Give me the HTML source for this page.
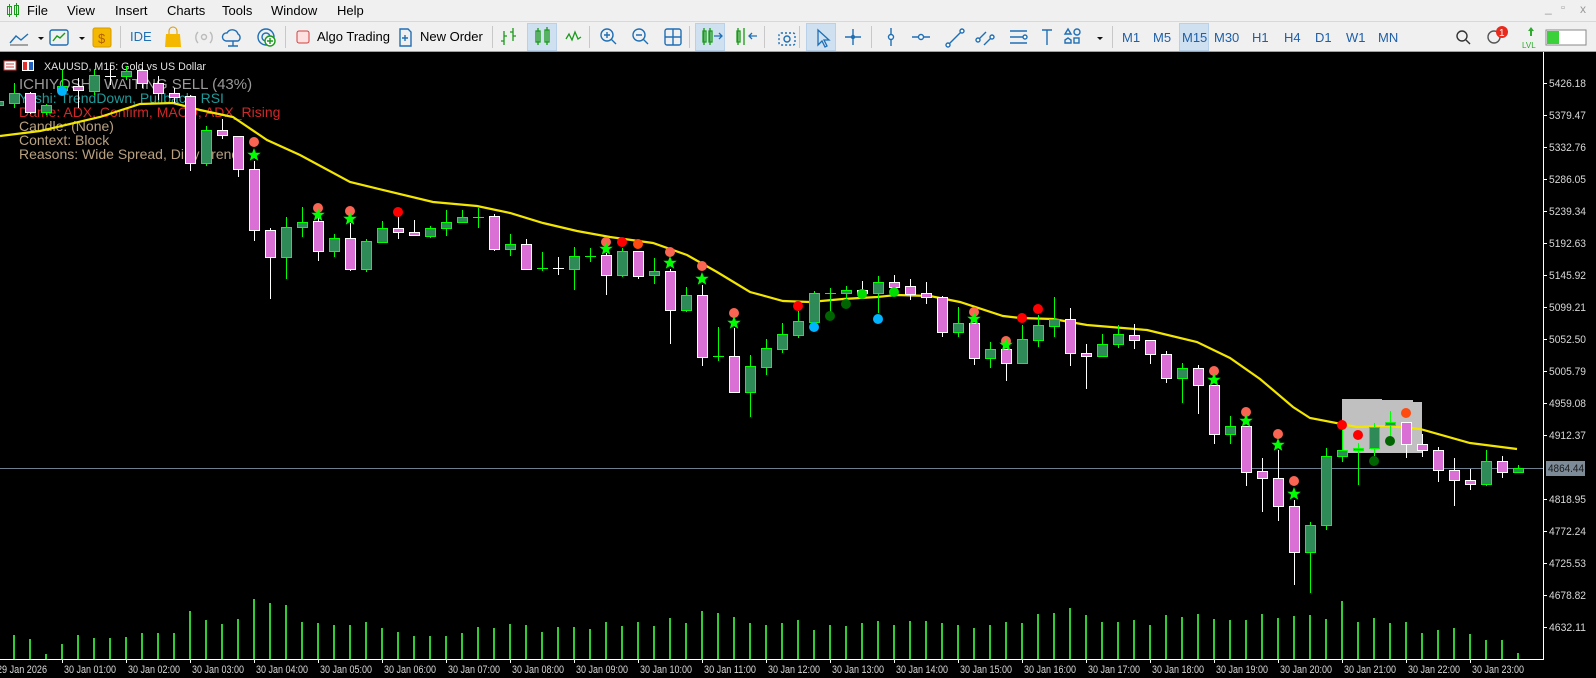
<!DOCTYPE html>
<html><head><meta charset="utf-8"><style>
*{margin:0;padding:0;box-sizing:border-box}
body{width:1596px;height:678px;overflow:hidden;background:#000;font-family:"Liberation Sans",sans-serif;position:relative}
#menu{position:absolute;left:0;top:0;width:1596px;height:21px;background:#f0f0f0;font-size:13px;color:#000}
#menu span{position:absolute;top:3px}
#tb{position:absolute;left:0;top:21px;width:1596px;height:31px;background:#f0f0f0;border-top:1px solid #d8d8d8;border-bottom:1px solid #a0a0a0}
#tb .t{position:absolute;top:7px;font-size:13px;color:#000}
#tb .tf{position:absolute;top:8px;font-size:13px;color:#1e5fa8}
#tb .sep{position:absolute;top:4px;width:1px;height:22px;background:#c8c8c8}
#tb .sel{position:absolute;top:1px;height:28px;background:#cfe0f0;border:1px solid #b8d0e8}
#tb svg{position:absolute;top:0}
#chart{position:absolute;left:0;top:52px}
</style></head><body>
<div id="menu">
<svg style="position:absolute;left:6px;top:3px" width="14" height="15"><rect x="1.5" y="3.5" width="4" height="8" fill="none" stroke="#1a9a1a"/><rect x="8.5" y="2.5" width="4" height="9" fill="none" stroke="#1a9a1a"/><path d="M3.5 1V14M10.5 0V14" stroke="#1a9a1a"/></svg>
<span style="left:27px">File</span><span style="left:67px">View</span><span style="left:115px">Insert</span><span style="left:167px">Charts</span><span style="left:222px">Tools</span><span style="left:271px">Window</span><span style="left:337px">Help</span>
<span style="left:1545px;top:1px;color:#999;font-size:12px">_</span><span style="left:1561px;top:2px;color:#999;font-size:11px">▫</span><span style="left:1580px;top:2px;color:#999;font-size:12px">x</span>
</div>
<div id="tb">
<svg width="1596" height="31" style="left:0">
<g fill="none" stroke="#1f6fb5" stroke-width="1.4">
<path d="M10 21 L16 14 L21 18 L28 12" /><path d="M10 23H28" stroke="#888"/>
<rect x="50" y="8" width="18" height="15" rx="2"/><path d="M53 19 L57 14 L60 16 L65 11" stroke="#1a9a1a"/>
<circle cx="204" cy="15" r="2.5" stroke="#bbb"/><path d="M198 10a8 8 0 0 0 0 11M210 10a8 8 0 0 1 0 11" stroke="#bbb"/>
<path d="M226 19a4 4 0 0 1 1-8a6 6 0 0 1 11 1a4 4 0 0 1 0 7z M233 19V24M228 24H238"/>
<circle cx="266" cy="15" r="8"/><circle cx="266" cy="15" r="4"/><circle cx="270" cy="19" r="5" fill="#fff" stroke="#1a9a1a"/><path d="M270 16V22M267 19H273" stroke="#1a9a1a"/>
<path d="M400 7h8l3 3v14h-11z"/><path d="M405 13v6M402 16h6"/>
<circle cx="607" cy="13" r="6"/><path d="M611 17l5 5M604 13h6M607 10v6"/>
<circle cx="639" cy="13" r="6"/><path d="M643 17l5 5M636 13h6"/>
<rect x="665" y="7" width="16" height="16" rx="2"/><path d="M673 7v16M665 15h16"/>
<rect x="779" y="11" width="16" height="12" rx="2" stroke-dasharray="2 2"/><circle cx="787" cy="17" r="3"/>
<path d="M853 7v16M845 15h16"/><circle cx="853" cy="15" r="1.5" fill="#1f6fb5"/>
<path d="M891 6v18"/><circle cx="891" cy="15" r="2.5" fill="#fff"/>
<path d="M912 15h18"/><circle cx="921" cy="15" r="2.5" fill="#fff"/>
<path d="M948 23l14-14"/><circle cx="948" cy="23" r="2" fill="#fff"/><circle cx="962" cy="9" r="2" fill="#fff"/>
<path d="M978 18l8-8M984 23l8-8"/><circle cx="978" cy="18" r="2" fill="#fff"/><circle cx="992" cy="15" r="2" fill="#fff"/>
<path d="M1010 9h17M1010 15h17M1010 21h17"/><circle cx="1025" cy="15" r="2" fill="#fff"/>
<path d="M1042 8h10M1047 8v15"/>
<path d="M1068 7l3 5h-6z"/><circle cx="1077" cy="10" r="3"/><path d="M1068 16l3 2v3h-6v-3z"/><rect x="1074" y="16" width="5" height="5"/>
<circle cx="1462" cy="14" r="5" stroke="#333"/><path d="M1466 18l4 4" stroke="#333"/>
<circle cx="1494" cy="15" r="6" stroke="#555"/>
</g>
<path d="M38 15h6l-3 3z M79 15h6l-3 3z M1097 15h6l-3 3z" fill="#111"/>
<rect x="93" y="6" width="18" height="19" rx="2" fill="#f5b800" stroke="#d89a00"/><text x="98" y="21" font-size="13" fill="#b06000" font-family="Liberation Sans">$</text>
<path d="M166 12h14l1 13h-16z" fill="#f5b800"/><path d="M169 12v-3a4 4 0 0 1 8 0v3" fill="none" stroke="#d89a00"/>
<rect x="297" y="9" width="12" height="12" rx="2" fill="#fde0e0" stroke="#d04040"/>
<g stroke="#1a9a1a" fill="none" stroke-width="1.3"><path d="M504 9v14M501 19h3M504 14h3M513 6v13M510 10h3M513 14h3"/>
<path d="M566 17l3-5l3 6l3-8l3 7l3-2"/>
<rect x="737" y="9" width="3" height="11"/><path d="M738 6v17M744 6v17"/></g>
<path d="M757 14h-8M752 11l-3 3l3 3" stroke="#1f6fb5" fill="none" stroke-width="1.3"/>
<circle cx="1502" cy="10" r="6" fill="#e8291c"/><text x="1499" y="14" font-size="10" fill="#fff" font-family="Liberation Sans">1</text>
<path d="M1528 9l3-4l3 4h-2v5h-2v-5z" fill="#2eaa2e"/><text x="1522" y="26" font-size="8" fill="#2eaa2e" font-family="Liberation Sans">LVL</text>
<rect x="1546" y="8" width="40" height="15" fill="#fff" stroke="#888"/><rect x="1547" y="9" width="12" height="13" fill="#3ad13a"/>
</svg>
<div class="sel" style="left:527px;width:30px"></div>
<div class="sel" style="left:695px;width:30px"></div>
<div class="sel" style="left:806px;width:30px"></div>
<div class="sel" style="left:1179px;width:30px"></div>
<svg width="1596" height="31" style="left:0;pointer-events:none">
<g stroke="#1a9a1a" fill="none" stroke-width="1.3"><rect x="536" y="9" width="4" height="11"/><rect x="545" y="8" width="4" height="12"/><path d="M538 6v17M547 5v18"/>
<rect x="703" y="9" width="3" height="11"/><rect x="709" y="9" width="3" height="11"/><path d="M704 6v17M710 6v17"/></g>
<path d="M714 14h8M719 11l3 3l-3 3" stroke="#1f6fb5" fill="none" stroke-width="1.3"/>
<path d="M818 8l0 15l4-4l3 6l2-1l-3-6h5z" stroke="#1f6fb5" fill="none" stroke-width="1.3"/>
</svg>
<div class="sep" style="left:120px"></div><div class="sep" style="left:285px"></div><div class="sep" style="left:492px"></div><div class="sep" style="left:589px"></div><div class="sep" style="left:689px"></div><div class="sep" style="left:764px"></div><div class="sep" style="left:799px"></div><div class="sep" style="left:871px"></div><div class="sep" style="left:1112px"></div>
<span class="t" style="left:130px;color:#1f6fb5">IDE</span>
<span class="t" style="left:317px">Algo Trading</span>
<span class="t" style="left:420px">New Order</span>
<span class="tf" style="left:1122px">M1</span><span class="tf" style="left:1153px">M5</span><span class="tf" style="left:1182px">M15</span><span class="tf" style="left:1214px">M30</span><span class="tf" style="left:1252px">H1</span><span class="tf" style="left:1284px">H4</span><span class="tf" style="left:1315px">D1</span><span class="tf" style="left:1346px">W1</span><span class="tf" style="left:1378px">MN</span>
</div>
<svg id="chart" width="1596" height="626" viewBox="0 52 1596 626" font-family="Liberation Sans">
<defs><polygon id="st" points="0,-7 1.8,-2.3 6.7,-2.2 2.9,0.9 4.2,5.7 0,3 -4.2,5.7 -2.9,0.9 -6.7,-2.2 -1.8,-2.3" fill="#00ff00"/></defs>
<rect x="0" y="52" width="1596" height="626" fill="#000"/>
<rect x="4" y="61" width="12" height="9" fill="#fff" stroke="#d04040"/><path d="M6 64h8M6 67h8" stroke="#d04040"/>
<rect x="22" y="60" width="12" height="11" fill="#fff"/><rect x="23" y="62" width="4" height="8" fill="#e03030"/><rect x="29" y="62" width="4" height="8" fill="#2060c0"/>
<text x="44" y="70" font-size="11" fill="#e0e0e0" textLength="162" lengthAdjust="spacingAndGlyphs">XAUUSD, M15:  Gold vs US Dollar</text>
<g font-size="14">
<text x="19" y="89" font-size="15" fill="#9a9a9a">ICHIYOSHI: WAITING SELL (43%)</text>
<text x="19" y="103" fill="#1f9a9a">Yoshi: TrendDown, Pullback, RSI</text>
<text x="19" y="117" fill="#d02828">Dame: ADX, Confirm, MACD, ADX_Rising</text>
<text x="19" y="131" fill="#b8a080">Candle: (None)</text>
<text x="19" y="145" fill="#b8a080">Context: Block</text>
<text x="19" y="159" fill="#b8a080">Reasons: Wide Spread, Dirty Trend</text>
</g>
<path d="M0 468.5H1543" stroke="#6e8090" stroke-width="1"/>
<polygon points="1342,399 1382,399 1382,400 1413,400 1413,402 1422,402 1422,453 1342,453" fill="#c0c0c0"/>
<polyline fill="none" stroke="#f2e600" stroke-width="2.2" points="0,136 40,131 100,117 140,104 173,103 200,110 233,117 267,140 300,155 350,182 433,202 477,206 510,213 543,223 577,231 610,237 653,243 687,255 717,272 750,292 783,301 810,302 843,299 877,297 897,295 930,296 960,302 1003,316 1020,318 1053,319 1087,325 1147,330 1197,342 1230,358 1260,379 1293,407 1310,418 1357,427 1387,426 1420,429 1470,443 1517,449"/>
<g stroke="#fff" stroke-width="1" fill="none">
<path d="M30.5 92V114M78.5 78V108M142.5 68V88M158.5 76V100M174.5 88V103M190.5 95V171M222.5 119V139M238.5 136V177M254.5 161V241M270.5 228V299M318.5 212V261M350.5 223V271M398.5 217V239M414.5 220V236M494.5 214V251M526.5 239V269M606.5 253V295M638.5 251V279M670.5 269V344M702.5 285V366M734.5 328V392M862.5 281V294M894.5 275V292M910.5 279V300M926.5 282V304M942.5 296V337M974.5 323V365M1006.5 349V381M1070.5 308V366M1086.5 344V389M1134.5 324V349M1150.5 340V364M1166.5 351V383M1198.5 365V414M1214.5 385V444M1246.5 426V486M1262.5 458V512M1278.5 450V521M1294.5 500V585M1406.5 422V458M1422.5 434V457M1438.5 447V482M1454.5 458V506M1470.5 469V490M1502.5 456V478"/>
<path d="M110.5 65V85M105 76.5H116M558.5 257V275M553 268.5H564"/>
</g>
<g stroke="#00ff00" stroke-width="1" fill="none">
<path d="M-1.5 99V108M14.5 83V108M46.5 104V115M62.5 69V95M94.5 69V95M126.5 66V80M206.5 126V166M286.5 217V279M302.5 207V237M334.5 234V257M366.5 239V272M382.5 221V243M430.5 226V238M446.5 210V236M462.5 210V222M510.5 234V256M574.5 247V290M622.5 248V277M654.5 258V284M686.5 287V312M750.5 355V417M766.5 339V375M782.5 323V353M798.5 311V338M814.5 291V322M846.5 286V300M878.5 276V313M958.5 307V337M990.5 342V368M1022.5 325V363M1038.5 315V347M1054.5 297V337M1102.5 334V356M1118.5 325V348M1182.5 363V403M1230.5 416V444M1310.5 522V593M1326.5 448V530M1342.5 425V462M1358.5 443V485M1374.5 423V456M1390.5 411V438M1486.5 450V486M1518.5 465V473"/>
<path d="M478.5 208V228M473 217.5H484M542.5 252V271M537 268.5H548M590.5 248V262M585 256.5H596M718.5 327V361M713 356.5H724M830.5 288V313M825 293.5H836"/>
</g>
<g fill="#da70d6" stroke="#fff" stroke-width="1">
<rect x="25.5" y="93.5" width="10" height="19"/><rect x="73.5" y="86.5" width="10" height="4"/><rect x="137.5" y="70.5" width="10" height="13"/><rect x="153.5" y="83.5" width="10" height="10"/><rect x="169.5" y="93.5" width="10" height="4"/><rect x="185.5" y="96.5" width="10" height="67"/><rect x="217.5" y="130.5" width="10" height="5"/><rect x="233.5" y="136.5" width="10" height="33"/><rect x="249.5" y="169.5" width="10" height="61"/><rect x="265.5" y="230.5" width="10" height="27"/><rect x="313.5" y="221.5" width="10" height="30"/><rect x="345.5" y="238.5" width="10" height="31"/><rect x="393.5" y="228.5" width="10" height="4"/><rect x="409.5" y="232.5" width="10" height="3"/><rect x="489.5" y="216.5" width="10" height="33"/><rect x="521.5" y="244.5" width="10" height="25"/><rect x="601.5" y="255.5" width="10" height="20"/><rect x="633.5" y="251.5" width="10" height="25"/><rect x="665.5" y="271.5" width="10" height="39"/><rect x="697.5" y="295.5" width="10" height="62"/><rect x="729.5" y="356.5" width="10" height="36"/><rect x="857.5" y="290.5" width="10" height="3"/><rect x="889.5" y="282.5" width="10" height="5"/><rect x="905.5" y="286.5" width="10" height="8"/><rect x="921.5" y="293.5" width="10" height="4"/><rect x="937.5" y="297.5" width="10" height="35"/><rect x="969.5" y="323.5" width="10" height="35"/><rect x="1001.5" y="349.5" width="10" height="14"/><rect x="1065.5" y="319.5" width="10" height="34"/><rect x="1081.5" y="353.5" width="10" height="3"/><rect x="1129.5" y="335.5" width="10" height="5"/><rect x="1145.5" y="340.5" width="10" height="14"/><rect x="1161.5" y="354.5" width="10" height="24"/><rect x="1193.5" y="368.5" width="10" height="17"/><rect x="1209.5" y="385.5" width="10" height="49"/><rect x="1241.5" y="426.5" width="10" height="46"/><rect x="1257.5" y="471.5" width="10" height="7"/><rect x="1273.5" y="478.5" width="10" height="28"/><rect x="1289.5" y="506.5" width="10" height="46"/><rect x="1401.5" y="422.5" width="10" height="22"/><rect x="1417.5" y="444.5" width="10" height="6"/><rect x="1433.5" y="450.5" width="10" height="20"/><rect x="1449.5" y="470.5" width="10" height="10"/><rect x="1465.5" y="480.5" width="10" height="4"/><rect x="1497.5" y="461.5" width="10" height="11"/>
</g>
<g fill="#2e8b57" stroke="#00ff00" stroke-width="1">
<rect x="-6.5" y="101.5" width="10" height="4"/><rect x="9.5" y="93.5" width="10" height="10"/><rect x="41.5" y="105.5" width="10" height="7"/><rect x="57.5" y="86.5" width="10" height="4"/><rect x="89.5" y="75.5" width="10" height="16"/><rect x="121.5" y="71.5" width="10" height="5"/><rect x="201.5" y="130.5" width="10" height="33"/><rect x="281.5" y="227.5" width="10" height="30"/><rect x="297.5" y="222.5" width="10" height="5"/><rect x="329.5" y="238.5" width="10" height="13"/><rect x="361.5" y="241.5" width="10" height="28"/><rect x="377.5" y="228.5" width="10" height="14"/><rect x="425.5" y="228.5" width="10" height="8"/><rect x="441.5" y="222.5" width="10" height="6"/><rect x="457.5" y="217.5" width="10" height="5"/><rect x="505.5" y="244.5" width="10" height="5"/><rect x="569.5" y="256.5" width="10" height="13"/><rect x="617.5" y="251.5" width="10" height="24"/><rect x="649.5" y="271.5" width="10" height="4"/><rect x="681.5" y="295.5" width="10" height="15"/><rect x="745.5" y="366.5" width="10" height="26"/><rect x="761.5" y="348.5" width="10" height="19"/><rect x="777.5" y="334.5" width="10" height="15"/><rect x="793.5" y="321.5" width="10" height="14"/><rect x="809.5" y="293.5" width="10" height="29"/><rect x="841.5" y="290.5" width="10" height="3"/><rect x="873.5" y="282.5" width="10" height="11"/><rect x="953.5" y="323.5" width="10" height="9"/><rect x="985.5" y="349.5" width="10" height="9"/><rect x="1017.5" y="339.5" width="10" height="24"/><rect x="1033.5" y="325.5" width="10" height="15"/><rect x="1049.5" y="319.5" width="10" height="7"/><rect x="1097.5" y="344.5" width="10" height="12"/><rect x="1113.5" y="334.5" width="10" height="10"/><rect x="1177.5" y="368.5" width="10" height="10"/><rect x="1225.5" y="426.5" width="10" height="8"/><rect x="1305.5" y="525.5" width="10" height="27"/><rect x="1321.5" y="456.5" width="10" height="69"/><rect x="1337.5" y="450.5" width="10" height="6"/><rect x="1353.5" y="448.5" width="10" height="2"/><rect x="1369.5" y="427.5" width="10" height="21"/><rect x="1385.5" y="422.5" width="10" height="3"/><rect x="1481.5" y="461.5" width="10" height="23"/><rect x="1513.5" y="468.5" width="10" height="4"/>
</g>
<g fill="#f96552">
<circle cx="254" cy="142" r="5"/><circle cx="318" cy="208" r="5"/><circle cx="350" cy="211" r="5"/><circle cx="606" cy="242" r="5"/><circle cx="670" cy="252" r="5"/><circle cx="702" cy="266" r="5"/><circle cx="734" cy="313" r="5"/><circle cx="974" cy="312" r="5"/><circle cx="1006" cy="341" r="5"/><circle cx="1214" cy="371" r="5"/><circle cx="1246" cy="412" r="5"/><circle cx="1278" cy="434" r="5"/><circle cx="1294" cy="481" r="5"/>
</g>
<g fill="#ff4a10"><circle cx="638" cy="244" r="5"/><circle cx="1406" cy="413" r="5"/></g>
<g fill="#ff0000"><circle cx="398" cy="212" r="5"/><circle cx="622" cy="242" r="5"/><circle cx="798" cy="306" r="5"/><circle cx="1022" cy="318" r="5"/><circle cx="1038" cy="309" r="5"/><circle cx="1342" cy="425" r="5"/><circle cx="1358" cy="435" r="5"/></g>
<g fill="#00b4ff"><circle cx="62" cy="91" r="5"/><circle cx="814" cy="327" r="5"/><circle cx="878" cy="319" r="5"/></g>
<g fill="#006400"><circle cx="830" cy="316" r="5"/><circle cx="846" cy="304" r="5"/><circle cx="1374" cy="461" r="5"/><circle cx="1390" cy="441" r="5"/></g>
<g fill="#00e000"><circle cx="862" cy="294" r="5"/><circle cx="894" cy="292" r="5"/></g>
<use href="#st" x="254" y="155"/><use href="#st" x="318" y="215"/><use href="#st" x="350" y="219"/><use href="#st" x="606" y="249"/><use href="#st" x="670" y="263"/><use href="#st" x="702" y="279"/><use href="#st" x="734" y="323"/><use href="#st" x="974" y="319"/><use href="#st" x="1006" y="345"/><use href="#st" x="1214" y="380"/><use href="#st" x="1246" y="421"/><use href="#st" x="1278" y="445"/><use href="#st" x="1294" y="494"/>
<path stroke="#32cd32" stroke-width="2" d="M14 659V635M30 659V639M46 659V654M62 659V644M78 659V635M94 659V638M110 659V638M126 659V637M142 659V633M158 659V633M174 659V633M190 659V611M206 659V620M222 659V624M238 659V619M254 659V599M270 659V603M286 659V605M302 659V622M318 659V623M334 659V625M350 659V625M366 659V622M382 659V628M398 659V632M414 659V636M430 659V636M446 659V636M462 659V633M478 659V627M494 659V628M510 659V624M526 659V625M542 659V632M558 659V627M574 659V627M590 659V629M606 659V622M622 659V626M638 659V622M654 659V626M670 659V618M686 659V623M702 659V611M718 659V613M734 659V617M750 659V623M766 659V625M782 659V623M798 659V620M814 659V630M830 659V625M846 659V626M862 659V623M878 659V621M894 659V625M910 659V621M926 659V621M942 659V623M958 659V625M974 659V628M990 659V625M1006 659V622M1022 659V623M1038 659V614M1054 659V613M1070 659V608M1086 659V615M1102 659V622M1118 659V622M1134 659V620M1150 659V625M1166 659V615M1182 659V617M1198 659V614M1214 659V619M1230 659V620M1246 659V620M1262 659V614M1278 659V618M1294 659V616M1310 659V615M1326 659V619M1342 659V601M1358 659V622M1374 659V618M1390 659V623M1406 659V622M1422 659V633M1438 659V630M1454 659V628M1470 659V634M1486 659V640M1502 659V640M1518 659V653"/>
<rect x="1544" y="52" width="52" height="626" fill="#000"/>
<rect x="0" y="660" width="1596" height="18" fill="#000"/>
<path d="M1543.5 52V659.5H0" stroke="#fff" fill="none"/>
<g stroke="#fff"><path d="M1543 83.5h4M1543 115.5h4M1543 147.5h4M1543 179.5h4M1543 211.5h4M1543 243.5h4M1543 275.5h4M1543 307.5h4M1543 339.5h4M1543 371.5h4M1543 403.5h4M1543 435.5h4M1543 499.5h4M1543 531.5h4M1543 563.5h4M1543 595.5h4M1543 627.5h4"/>
<path d="M62.5 659v4M126.5 659v4M190.5 659v4M254.5 659v4M318.5 659v4M382.5 659v4M446.5 659v4M510.5 659v4M574.5 659v4M638.5 659v4M702.5 659v4M766.5 659v4M830.5 659v4M894.5 659v4M958.5 659v4M1022.5 659v4M1086.5 659v4M1150.5 659v4M1214.5 659v4M1278.5 659v4M1342.5 659v4M1406.5 659v4M1470.5 659v4"/></g>
<g font-size="11" fill="#d8d8d8">
<text x="1549" y="87" textLength="37" lengthAdjust="spacingAndGlyphs">5426.18</text><text x="1549" y="119" textLength="37" lengthAdjust="spacingAndGlyphs">5379.47</text><text x="1549" y="151" textLength="37" lengthAdjust="spacingAndGlyphs">5332.76</text><text x="1549" y="183" textLength="37" lengthAdjust="spacingAndGlyphs">5286.05</text><text x="1549" y="215" textLength="37" lengthAdjust="spacingAndGlyphs">5239.34</text><text x="1549" y="247" textLength="37" lengthAdjust="spacingAndGlyphs">5192.63</text><text x="1549" y="279" textLength="37" lengthAdjust="spacingAndGlyphs">5145.92</text><text x="1549" y="311" textLength="37" lengthAdjust="spacingAndGlyphs">5099.21</text><text x="1549" y="343" textLength="37" lengthAdjust="spacingAndGlyphs">5052.50</text><text x="1549" y="375" textLength="37" lengthAdjust="spacingAndGlyphs">5005.79</text><text x="1549" y="407" textLength="37" lengthAdjust="spacingAndGlyphs">4959.08</text><text x="1549" y="439" textLength="37" lengthAdjust="spacingAndGlyphs">4912.37</text><text x="1549" y="503" textLength="37" lengthAdjust="spacingAndGlyphs">4818.95</text><text x="1549" y="535" textLength="37" lengthAdjust="spacingAndGlyphs">4772.24</text><text x="1549" y="567" textLength="37" lengthAdjust="spacingAndGlyphs">4725.53</text><text x="1549" y="599" textLength="37" lengthAdjust="spacingAndGlyphs">4678.82</text><text x="1549" y="631" textLength="37" lengthAdjust="spacingAndGlyphs">4632.11</text>
</g>
<rect x="1546" y="461" width="39" height="15" fill="#7d8b98"/>
<text x="1548" y="472" font-size="11" fill="#1a1a1a" textLength="36" lengthAdjust="spacingAndGlyphs">4864.44</text>
<g font-size="11" fill="#d8d8d8" lengthAdjust="spacingAndGlyphs">
<text x="-3" y="673" textLength="50" lengthAdjust="spacingAndGlyphs">29 Jan 2026</text><text x="64" y="673" textLength="52" lengthAdjust="spacingAndGlyphs">30 Jan 01:00</text><text x="128" y="673" textLength="52" lengthAdjust="spacingAndGlyphs">30 Jan 02:00</text><text x="192" y="673" textLength="52" lengthAdjust="spacingAndGlyphs">30 Jan 03:00</text><text x="256" y="673" textLength="52" lengthAdjust="spacingAndGlyphs">30 Jan 04:00</text><text x="320" y="673" textLength="52" lengthAdjust="spacingAndGlyphs">30 Jan 05:00</text><text x="384" y="673" textLength="52" lengthAdjust="spacingAndGlyphs">30 Jan 06:00</text><text x="448" y="673" textLength="52" lengthAdjust="spacingAndGlyphs">30 Jan 07:00</text><text x="512" y="673" textLength="52" lengthAdjust="spacingAndGlyphs">30 Jan 08:00</text><text x="576" y="673" textLength="52" lengthAdjust="spacingAndGlyphs">30 Jan 09:00</text><text x="640" y="673" textLength="52" lengthAdjust="spacingAndGlyphs">30 Jan 10:00</text><text x="704" y="673" textLength="52" lengthAdjust="spacingAndGlyphs">30 Jan 11:00</text><text x="768" y="673" textLength="52" lengthAdjust="spacingAndGlyphs">30 Jan 12:00</text><text x="832" y="673" textLength="52" lengthAdjust="spacingAndGlyphs">30 Jan 13:00</text><text x="896" y="673" textLength="52" lengthAdjust="spacingAndGlyphs">30 Jan 14:00</text><text x="960" y="673" textLength="52" lengthAdjust="spacingAndGlyphs">30 Jan 15:00</text><text x="1024" y="673" textLength="52" lengthAdjust="spacingAndGlyphs">30 Jan 16:00</text><text x="1088" y="673" textLength="52" lengthAdjust="spacingAndGlyphs">30 Jan 17:00</text><text x="1152" y="673" textLength="52" lengthAdjust="spacingAndGlyphs">30 Jan 18:00</text><text x="1216" y="673" textLength="52" lengthAdjust="spacingAndGlyphs">30 Jan 19:00</text><text x="1280" y="673" textLength="52" lengthAdjust="spacingAndGlyphs">30 Jan 20:00</text><text x="1344" y="673" textLength="52" lengthAdjust="spacingAndGlyphs">30 Jan 21:00</text><text x="1408" y="673" textLength="52" lengthAdjust="spacingAndGlyphs">30 Jan 22:00</text><text x="1472" y="673" textLength="52" lengthAdjust="spacingAndGlyphs">30 Jan 23:00</text>
</g>
</svg>
</body></html>
